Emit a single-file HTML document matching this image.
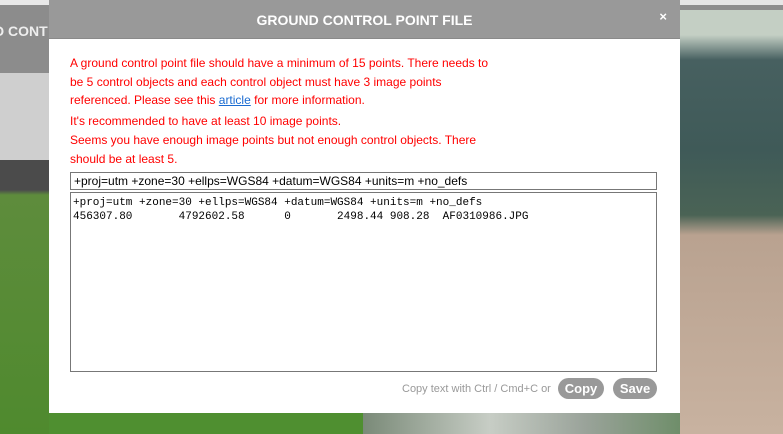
<!DOCTYPE html>
<html><head><meta charset="utf-8"><style>
*{margin:0;padding:0;box-sizing:border-box}
html,body{width:783px;height:434px;overflow:hidden;position:relative;font-family:"Liberation Sans",Arial,sans-serif}
.bg{position:absolute}
.modal{position:absolute;left:49px;top:0;width:631px;height:413px;background:#fff}
.hdr{height:39px;background:#999;border-bottom:1px solid #8a8a8a;color:#fff;font-weight:bold;font-size:14px;text-align:center;line-height:40px}
.x{position:absolute;right:13px;top:9px;color:#fff;font-size:13px;font-weight:bold}
.msg{position:absolute;left:21px;color:#ff0000;font-size:12px;line-height:18.5px;width:432px}
a{color:#1a6bd1}
.inp{position:absolute;left:21px;top:172px;width:587px;height:18px;border:1px solid #777;font-size:12px;line-height:16px;padding-left:3px;color:#000}
.ta{position:absolute;left:21px;top:192px;width:587px;height:180px;border:1px solid #777;font-family:"Liberation Mono",monospace;font-size:11px;line-height:14px;padding:3px 2px;white-space:pre;tab-size:8;color:#000}
.btn{position:absolute;top:378px;height:21px;border-radius:11px;background:#999;color:#fff;font-weight:bold;font-size:13px;line-height:21px;text-align:center}
.hint{position:absolute;top:383px;left:353px;font-size:11px;color:#999}
</style></head><body>
<div class="bg" style="left:0;top:0;width:783px;height:434px;background:linear-gradient(#cdd8cc,#c8cfc8)"></div>
<div class="bg" style="left:0;top:0;width:49px;height:434px;background:linear-gradient(#e8e8e8 0 5px,#8c8c8c 5px 73px,#cfcfcf 73px 160px,#4b4b4b 160px 190px,#5e8c3c 195px,#4f8a2e 434px)"></div>
<div class="bg" style="left:0;top:5px;width:49px;height:68px;background:#8c8c8c;color:#eee;font-weight:bold;font-size:14px;line-height:52px;white-space:nowrap;overflow:hidden;text-indent:-6px">D CONT</div>
<div class="bg" style="left:680px;top:0;width:103px;height:434px;background:linear-gradient(#e6e6e6 0 5px,#8e8e8e 5px 10px,#c4cfc4 10px 35px,#476060 60px,#3f5a58 150px,#4a6355 215px,#b9a290 235px,#c8b2a0 434px)"></div>
<div class="bg" style="left:49px;top:413px;width:314px;height:21px;background:#4f8f30"></div>
<div class="bg" style="left:363px;top:413px;width:317px;height:21px;background:linear-gradient(90deg,#7a8a78,#c7cdc5 40%,#9aa39a 70%,#6f8e6a)"></div>
<div class="modal">
<div class="hdr">GROUND CONTROL POINT FILE</div>
<div class="x">×</div>
<div class="msg" style="top:54px">A ground control point file should have a minimum of 15 points. There needs to be 5 control objects and each control object must have 3 image points referenced. Please see this <a href="#">article</a> for more information.</div>
<div class="msg" style="top:112px">It's recommended to have at least 10 image points.</div>
<div class="msg" style="top:131px">Seems you have enough image points but not enough control objects. There should be at least 5.</div>
<div class="inp">+proj=utm +zone=30 +ellps=WGS84 +datum=WGS84 +units=m +no_defs</div>
<div class="ta">+proj=utm +zone=30 +ellps=WGS84 +datum=WGS84 +units=m +no_defs
456307.80	4792602.58	0	2498.44 908.28  AF0310986.JPG</div>
<div class="hint">Copy text with Ctrl / Cmd+C or</div>
<div class="btn" style="left:509px;width:46px">Copy</div>
<div class="btn" style="left:564px;width:44px">Save</div>
</div>
</body></html>
